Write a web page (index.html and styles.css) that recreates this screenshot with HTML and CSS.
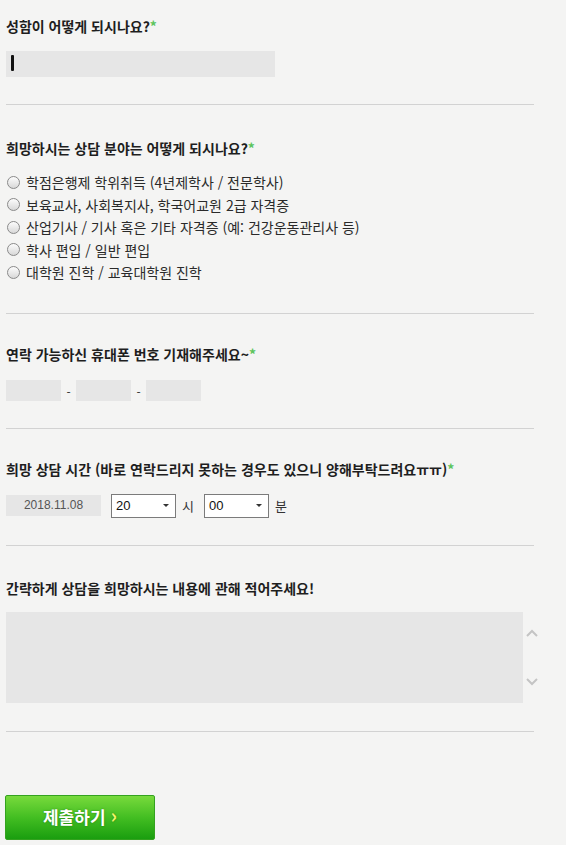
FILE: index.html
```html
<!DOCTYPE html>
<html lang="ko">
<head>
<meta charset="utf-8">
<title>상담 신청</title>
<link rel="stylesheet" href="styles.css">
</head>
<body>
<form class="form">
  <section class="sec sec-name">
    <h3 class="q">성함이 어떻게 되시나요?<span class="req">*</span></h3>
    <div class="field field-name"><span class="caret"></span></div>
  </section>

  <section class="sec sec-field">
    <h3 class="q">희망하시는 상담 분야는 어떻게 되시나요?<span class="req">*</span></h3>
    <ul class="opts">
      <li class="opt"><span class="radio"></span>학점은행제 학위취득 (4년제학사 / 전문학사)</li>
      <li class="opt"><span class="radio"></span>보육교사, 사회복지사, 학국어교원 2급 자격증</li>
      <li class="opt"><span class="radio"></span>산업기사 / 기사 혹은 기타 자격증 (예: 건강운동관리사 등)</li>
      <li class="opt"><span class="radio"></span>학사 편입 / 일반 편입</li>
      <li class="opt"><span class="radio"></span>대학원 진학 / 교육대학원 진학</li>
    </ul>
  </section>

  <section class="sec sec-phone">
    <h3 class="q">연락 가능하신 휴대폰 번호 기재해주세요~<span class="req">*</span></h3>
    <div class="phone">
      <span class="field field-ph"></span><span class="dash">-</span><span class="field field-ph"></span><span class="dash">-</span><span class="field field-ph"></span>
    </div>
  </section>

  <section class="sec sec-time">
    <h3 class="q">희망 상담 시간 (바로 연락드리지 못하는 경우도 있으니 양해부탁드려요ㅠㅠ)<span class="req">*</span></h3>
    <div class="time">
      <span class="date">2018.11.08</span>
      <span class="select sel-h"><span class="val">20</span><span class="tri"></span></span>
      <span class="unit unit-h">시</span>
      <span class="select sel-m"><span class="val">00</span><span class="tri"></span></span>
      <span class="unit">분</span>
    </div>
  </section>

  <section class="sec sec-memo">
    <h3 class="q">간략하게 상담을 희망하시는 내용에 관해 적어주세요!</h3>
    <div class="memo">
      <div class="memo-box"></div>
      <div class="scroll">
        <svg width="12" height="8" viewBox="0 0 12 8"><path d="M1 7 L6 2 L11 7" fill="none" stroke="#c4c4c4" stroke-width="2"/></svg>
        <svg width="12" height="8" viewBox="0 0 12 8"><path d="M1 1 L6 6 L11 1" fill="none" stroke="#c4c4c4" stroke-width="2"/></svg>
      </div>
    </div>
  </section>

  <div class="submit-wrap">
    <button type="button" class="submit">제출하기<span class="chev">›</span></button>
  </div>
</form>
</body>
</html>
```

FILE: styles.css
```css
* { box-sizing: border-box; }
html, body { margin: 0; padding: 0; }
body {
  background: #f4f4f3;
  font-family: "Noto Sans CJK KR", "Noto Sans", sans-serif;
  color: #222;
}
.form {
  width: 534px;
  padding-left: 6px;
}
.sec {
  border-bottom: 1px solid #d2d2d2;
}
.q {
  margin: 0;
  font-size: 14px;
  line-height: 16px;
  font-weight: bold;
  color: #1e1e1e;
  white-space: nowrap;
}
.req { color: #5cc45c; }

.field {
  display: block;
  background: #e6e6e6;
}

/* name */
.sec-name { padding: 18px 0 27px; }
.field-name {
  margin-top: 17px;
  width: 269px;
  height: 26px;
  padding: 4px 0 0 5px;
}
.caret {
  display: block;
  width: 3px;
  height: 16px;
  background: #111;
  border-radius: 1px;
}

/* field */
.sec-field { padding: 35px 0 29px; }
.opts {
  list-style: none;
  margin: 15px 0 0;
  padding: 0;
}
.opt {
  display: flex;
  align-items: center;
  height: 22.5px;
  font-size: 14px;
  color: #2a2a2a;
  white-space: nowrap;
}
.radio {
  width: 13px;
  height: 13px;
  margin: 0 6px 0 1px;
  border-radius: 50%;
  border: 1px solid #8a8a8a;
  background: linear-gradient(#fcfcfc, #d8d8d8);
  flex: none;
}

/* phone */
.sec-phone { padding: 32px 0 27px; }
.phone {
  display: flex;
  align-items: center;
  height: 21px;
  margin-top: 18px;
}
.field-ph {
  width: 55px;
  height: 21px;
}
.dash {
  width: 15px;
  height: 21px;
  text-align: center;
  font-size: 12px;
  color: #333;
  line-height: 24px;
}

/* time */
.sec-time { padding: 32px 0 27px; }
.time {
  display: flex;
  align-items: center;
  margin-top: 17px;
  height: 24px;
}
.date {
  width: 95px;
  height: 21px;
  background: #e6e6e6;
  font-family: "Liberation Sans", Arial, sans-serif;
  font-size: 12px;
  color: #555;
  text-align: center;
  line-height: 21px;
}
.select {
  display: flex;
  align-items: center;
  justify-content: space-between;
  width: 65px;
  height: 24px;
  background: #fff;
  border: 1px solid #7b7b7b;
  padding: 0 6px 0 4px;
  font-family: "Liberation Sans", Arial, sans-serif;
  font-size: 13px;
  color: #111;
}
.sel-h { margin-left: 10px; }
.tri {
  width: 0;
  height: 0;
  border-left: 3px solid transparent;
  border-right: 3px solid transparent;
  border-top: 3px solid #333;
}
.unit {
  font-size: 13px;
  line-height: 24px;
  color: #333;
  margin: 0 6px;
}
.unit-h { margin: 0 10px 0 6px; }

/* memo */
.sec-memo { padding: 34px 0 28px; }
.memo {
  display: flex;
  margin-top: 16px;
}
.memo-box {
  width: 517px;
  height: 91px;
  background: #e6e6e6;
}
.scroll {
  width: 17px;
  margin-right: -6px;
  display: flex;
  flex-direction: column;
  justify-content: space-between;
  align-items: center;
  padding: 17px 0 17px;
}

/* submit */
.submit-wrap { padding-top: 63px; margin-left: -1px; }
.submit {
  display: flex;
  align-items: center;
  justify-content: center;
  width: 150px;
  height: 45px;
  padding: 0 0 2px;
  border: 1px solid #34a21f;
  border-radius: 2px;
  background: linear-gradient(#78da3c, #43be22 50%, #1a9e0f);
  color: #fff;
  font-family: "Noto Sans CJK KR", sans-serif;
  font-size: 17px;
  font-weight: bold;
  text-shadow: 0 0 2px rgba(0,80,0,0.5);
  cursor: pointer;
}
.chev {
  color: #f3f36a;
  font-size: 20px;
  margin-left: 5px;
  line-height: 1;
  margin-top: -2px;
}
```
